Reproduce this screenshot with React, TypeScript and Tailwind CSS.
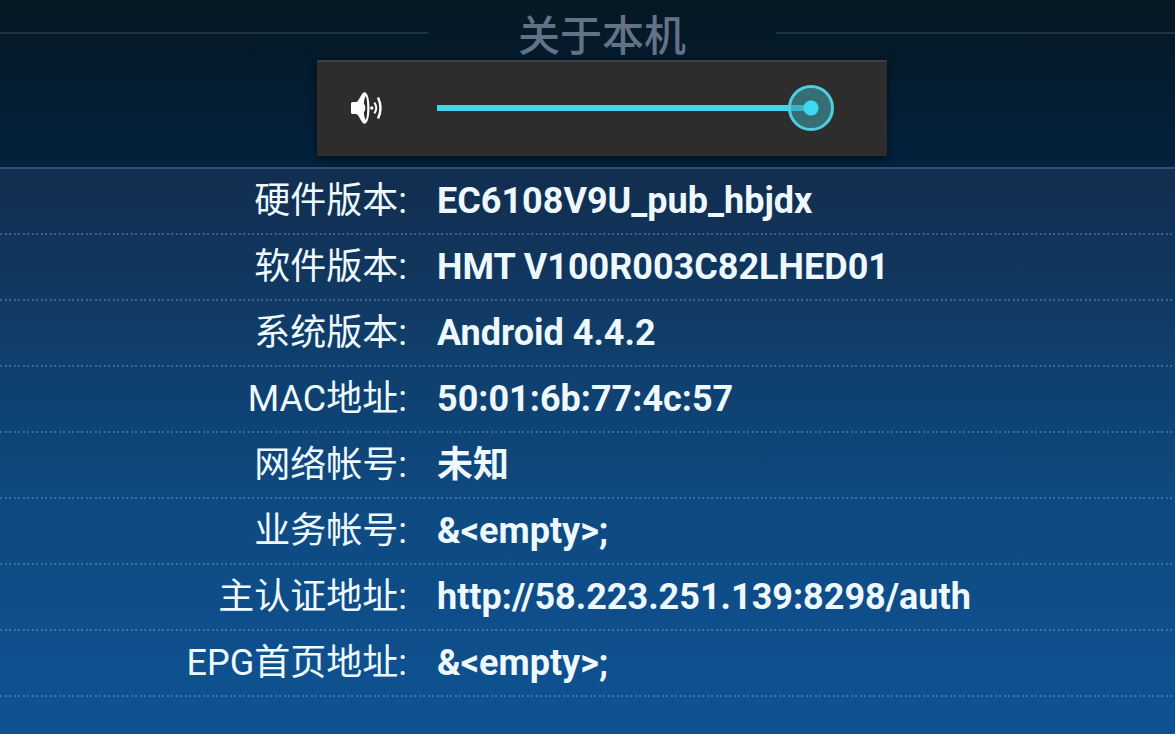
import { useState } from 'react'

interface InfoItem {
  label: string
  value: string
}

const items: InfoItem[] = [
  { label: '硬件版本', value: 'EC6108V9U_pub_hbjdx' },
  { label: '软件版本', value: 'HMT V100R003C82LHED01' },
  { label: '系统版本', value: 'Android 4.4.2' },
  { label: 'MAC地址', value: '50:01:6b:77:4c:57' },
  { label: '网络帐号', value: '未知' },
  { label: '业务帐号', value: '&<empty>;' },
  { label: '主认证地址', value: 'http://58.223.251.139:8298/auth' },
  { label: 'EPG首页地址', value: '&<empty>;' },
]

function SpeakerIcon() {
  return (
    <svg viewBox="0 0 32 34" className="h-[34px] w-8 shrink-0" aria-hidden="true">
      <path
        d="M1 12.5Q1 11 2.500 11H6.500C9.500 9 11 3 14 1.200C17.800 .5 19.500 9 19.500 17S17.800 33 14 32.800C11 31 9.500 25 6.500 23H2.500Q1 23 1 21.500Z"
        fill="#fff"
      />
      <path
        d="M15.800 5C17.800 8 17.800 26 15.800 29C14.500 27.500 14 24 13.900 21C15.800 20 15.800 14 13.900 13C14 10 14.500 6.500 15.800 5Z"
        fill="#2d2d2d"
      />
      <circle cx="21.800" cy="17" r="1.700" fill="#fff" />
      <path d="M24.300 11.500Q28.300 17 24.300 22.500" fill="none" stroke="#fff" strokeWidth="2" />
      <path d="M28 6.500Q33 17 28 27.500" fill="none" stroke="#fff" strokeWidth="2.400" />
    </svg>
  )
}

function VolumePanel() {
  const [volume, setVolume] = useState(100)

  return (
    <div className="absolute top-[60px] left-1/2 z-10 flex h-24 w-[570px] -translate-x-1/2 items-center rounded-xs bg-[#2d2d2d] pr-[53px] pl-[33px] shadow-[inset_0_2px_0_#3c4047,0_2px_8px_rgba(0,0,0,0.6)]">
      <SpeakerIcon />
      <input
        type="range"
        min={0}
        max={100}
        value={volume}
        onChange={(e) => setVolume(Number(e.target.value))}
        aria-label="音量"
        className="ml-[55px] h-[46px] min-w-0 flex-1 cursor-pointer appearance-none bg-[linear-gradient(#45d3ea,#45d3ea)] bg-left bg-no-repeat outline-none [&::-webkit-slider-thumb]:size-[46px] [&::-webkit-slider-thumb]:appearance-none [&::-webkit-slider-thumb]:rounded-full [&::-webkit-slider-thumb]:border-3 [&::-webkit-slider-thumb]:border-[#4fd0df] [&::-webkit-slider-thumb]:bg-[radial-gradient(circle,#3ed8f0_7px,rgba(58,155,165,0.6)_8px)]"
        style={{ backgroundSize: `calc((100% - 46px) * ${volume / 100} + 23px) 6px` }}
      />
    </div>
  )
}

function InfoRow({ label, value }: InfoItem) {
  return (
    <div className="flex h-[66px] flex-col">
      <div className="flex flex-1 items-center text-4xl">
        <dt className="w-[407px] shrink-0 text-right font-normal text-[#eefaff]">{label}:</dt>
        <dd className="ml-[30px] font-bold text-[#eef9ff]">{value}</dd>
      </div>
      <div className="h-[2px] bg-[repeating-linear-gradient(90deg,rgba(160,200,230,0.3)_0_2px,transparent_2px_5px,rgba(160,200,230,0.3)_5px_7px,transparent_7px_9px)]" />
    </div>
  )
}

export default function App() {
  return (
    <main className="flex min-h-screen flex-col bg-[linear-gradient(#051722_0%,#04223e_23%,#0b3c68_48%,#0e4a82_70%,#0f5293_100%)] font-['Roboto','Noto_Sans_CJK_SC',sans-serif]">
      <header className="grid h-[167px] grid-cols-[428fr_348px_399fr]">
        <div className="mt-8 h-[2px] bg-[#21313f]" />
        <div className="relative">
          <h1 className="pt-2 text-center text-[42px] leading-[58px] font-medium text-[#647286]">
            关于本机
          </h1>
          <VolumePanel />
        </div>
        <div className="mt-8 h-[2px] bg-[#21313f]" />
      </header>
      <dl className="flex-1 border-t-2 border-[#30506f] bg-[linear-gradient(rgba(60,80,130,0.25)_0%,rgba(40,80,140,0.1)_40%,transparent_70%)]">
        {items.map((item) => (
          <InfoRow key={item.label} {...item} />
        ))}
      </dl>
    </main>
  )
}
